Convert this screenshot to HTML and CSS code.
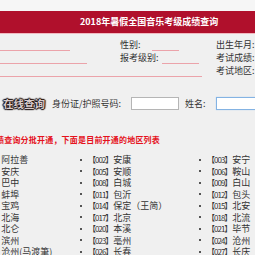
FILE: index.html
```html
<!DOCTYPE html>
<html lang="zh-CN">
<head>
  <meta charset="UTF-8" />
  <title>2018年暑假全国音乐考级成绩查询</title>
  <link rel="stylesheet" href="styles.css">
</head>
<body>
  <div class="topbar"></div>
  <div class="title">2018年暑假全国音乐考级成绩查询</div>

  <div class="info">
    <div class="cell"><span class="line line-70"></span></div>
    <div class="cell">性别:<span class="val val-sex"></span></div>
    <div class="cell">出生年月:</div>

    <div class="cell"><span class="line line-87"></span></div>
    <div class="cell">报考级别:<span class="val val-level"></span></div>
    <div class="cell">考试成绩:</div>

    <div class="cell wide"><span class="line line-202"></span></div>
    <div class="cell">考试地区:</div>
  </div>

  <div class="query">
    <span class="query-logo">在线查询</span>
    <label class="query-label">身份证/护照号码:</label>
    <input class="field" type="text">
    <label class="query-label">姓名:</label>
    <input class="field field-focus" type="text">
  </div>

  <p class="notice">绩查询分批开通，下面是目前开通的地区列表</p>

  <ul class="areas">
    <li><span class="code">【001】</span>阿拉善</li>
    <li><span class="code">【002】</span>安康</li>
    <li><span class="code">【003】</span>安宁</li>
    <li><span class="code">【004】</span>安庆</li>
    <li><span class="code">【005】</span>安顺</li>
    <li><span class="code">【006】</span>鞍山</li>
    <li><span class="code">【007】</span>巴中</li>
    <li><span class="code">【008】</span>白城</li>
    <li><span class="code">【009】</span>白山</li>
    <li><span class="code">【010】</span>蚌埠</li>
    <li><span class="code">【011】</span>包沂</li>
    <li><span class="code">【012】</span>包头</li>
    <li><span class="code">【013】</span>宝鸡</li>
    <li><span class="code">【014】</span>保定（王简）</li>
    <li><span class="code">【015】</span>北安</li>
    <li><span class="code">【016】</span>北海</li>
    <li><span class="code">【017】</span>北京</li>
    <li><span class="code">【018】</span>北流</li>
    <li><span class="code">【019】</span>北仑</li>
    <li><span class="code">【020】</span>本溪</li>
    <li><span class="code">【021】</span>毕节</li>
    <li><span class="code">【022】</span>滨州</li>
    <li><span class="code">【023】</span>亳州</li>
    <li><span class="code">【024】</span>沧州（马渡）</li>
    <li><span class="code">【025】</span>沧州(马渡筆)</li>
    <li><span class="code">【026】</span>长春</li>
    <li><span class="code">【027】</span>长庆</li>
  </ul>
</body>
</html>
```

FILE: styles.css
```css
* {
  box-sizing: border-box;
}

html, body {
  margin: 0;
  padding: 0;
}

body {
  background: #f0f0f0;
  color: #333;
  font-family: "Noto Sans CJK SC", "DejaVu Sans", sans-serif;
  font-size: 9px;
  overflow: hidden;
}

.topbar {
  height: 11px;
  background: #f6f6f6;
}

.title {
  height: 23px;
  line-height: 22px;
  padding-left: 80px;
  background: #b0102c;
  border-bottom: 1px solid #f1b9c0;
  color: #fff;
  font-weight: bold;
  white-space: nowrap;
}

/* блок с данными участника */
.info {
  display: grid;
  grid-template-columns: 120px 96px 1fr;
  grid-auto-rows: 13px;
  padding-top: 4px;
}

.cell {
  display: flex;
  align-items: center;
  height: 13px;
  white-space: nowrap;
}

.cell.wide {
  grid-column: 1 / 3;
}

.line {
  display: block;
  height: 13px;
  border-bottom: 1px solid #eba3aa;
}

.line-70 { width: 70px; }
.line-87 { width: 87px; }
.line-202 { width: 202px; }

.val {
  display: block;
  height: 13px;
  border-bottom: 1px solid #eba3aa;
}

.val-sex {
  width: 27px;
  margin-left: 11px;
}

.val-level {
  width: 37px;
  margin-left: 3px;
}

.query {
  display: flex;
  align-items: center;
  height: 14px;
  margin-top: 19px;
  padding-left: 3px;
  white-space: nowrap;
}

.query-logo {
  width: 42px;
  margin-right: 7px;
  font-size: 10.5px;
  font-weight: bold;
  color: #d9cccc;
  text-shadow: 1px 0 1px #1a0d0d, -1px 0 1px #1a0d0d, 0 1px 1px #1a0d0d, 0 -1px 1px #1a0d0d, 0 0 2px #000;
}

.query-label {
  margin-right: 10px;
}

.field {
  width: 48px;
  height: 13px;
  margin: 0 6px 0 0;
  padding: 0;
  border: 1px solid #b5b5b5;
  background: #fff;
}

.field-focus {
  width: 60px;
  border-color: #84b3e3;
  box-shadow: 0 0 1px #a9cdf3;
}

.notice {
  margin: 24px 0 0 -4px;
  line-height: 12px;
  color: #e5121c;
  font-size: 8px;
  font-weight: bold;
  letter-spacing: 0.2px;
  white-space: nowrap;
}

.areas {
  display: grid;
  grid-template-columns: 112px 119px 119px;
  margin: 8px 0 0 -33px;
  padding: 0;
  list-style: none;
  line-height: 11.5px;
}

.areas li {
  display: flex;
  align-items: center;
  white-space: nowrap;
}

.areas li::before {
  content: "";
  flex: none;
  width: 2px;
  height: 2px;
  margin: 0 6px 0 1px;
  background: #555;
}

.code {
  font-size: 8px;
  letter-spacing: -1px;
  margin-right: 1px;
}
```
